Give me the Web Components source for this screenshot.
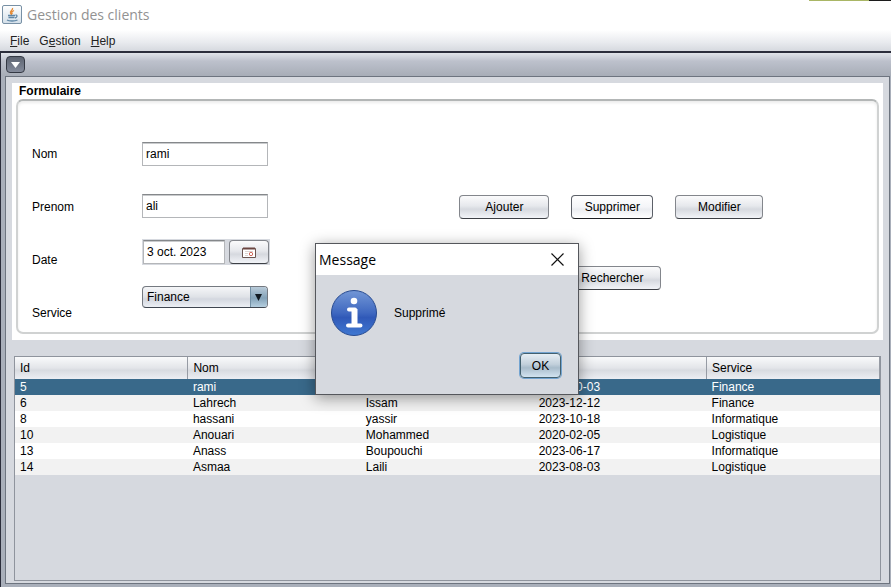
<!DOCTYPE html>
<html lang="fr">
<head>
<meta charset="UTF-8">
<meta name="viewport" content="width=device-width, initial-scale=1">
<title>Gestion des clients</title>
<style>
    body {
        margin: 0;
        min-height: 100vh;
        display: flex;
        flex-direction: column;
        background: #fff;
        color: #000;
        font-family: "Liberation Sans", Arial, sans-serif;
        font-size: 12px;
    }

    internal-frame {
        flex: 1;
    }

    client-table {
        flex: 1;
    }
</style>
</head>
<body>
    <window-title>Gestion des clients</window-title>
    <menu-bar></menu-bar>
    <internal-frame>
        <client-form></client-form>
        <client-table selected="5"></client-table>
    </internal-frame>
    <message-dialog heading="Message">Supprimé</message-dialog>

<script>
// Relief commun à tous les boutons
const buttonStyles = `
    button {
        height: 24px;
        padding: 0;
        border: 1px solid #83868c;
        border-bottom-color: #3d4046;
        border-radius: 4px;
        background: linear-gradient(#fbfbfc, #e6e8ec 45%, #d6d9df 60%, #f2f4f8);
        color: #000;
        font: inherit;
    }
`;

// Barre de titre de la fenêtre
class WindowTitle extends HTMLElement {
    constructor() {
        super();
        this.attachShadow({ mode: 'open' });
    }

    connectedCallback() {
        this.shadowRoot.innerHTML = `
            <style>
                :host {
                    display: flex;
                    align-items: center;
                    gap: 5px;
                    height: 29px;
                    padding: 0 0 1px 2px;
                    color: #929292;
                    font: 14px "Open Sans", sans-serif;
                }
                .edge {
                    display: flex;
                    align-self: flex-start;
                    margin-left: auto;
                }
                .edge i {
                    width: 60px;
                    height: 1px;
                    background: #a9b665;
                }
                .edge i + i {
                    width: 22px;
                    background: #1c1c1c;
                }
            </style>
            <svg width="20" height="20" viewBox="0 0 20 20" aria-hidden="true">
                <defs>
                    <linearGradient id="tile" x2="0" y2="1">
                        <stop offset="0" stop-color="#fff"/>
                        <stop offset="1" stop-color="#d3dfe9"/>
                    </linearGradient>
                </defs>
                <rect x=".5" y=".5" width="19" height="18" rx="1.5" fill="url(#tile)" stroke="#7890a5"/>
                <path d="M10.5 3c1 2-3 3-2 5 .3.8 1 1.200 1 2M12 5.500c-2 1-3 1.500-1.600 3.500" fill="none" stroke="#e58a35" stroke-width="1.300"/>
                <path d="M6 10.500h7M6.500 12.500h6M13.500 10c2.500 0 1.500 2.500-.5 3M5 15c2 1.300 8 1.300 10.500 0" fill="none" stroke="#5f86a6" stroke-width="1.300"/>
            </svg>
            <span><slot></slot></span>
            <div class="edge"><i></i><i></i></div>
        `;
    }
}

// Menus de l'application, avec leur lettre mnémonique soulignée
class MenuBar extends HTMLElement {
    constructor() {
        super();
        this.attachShadow({ mode: 'open' });
    }

    connectedCallback() {
        this.shadowRoot.innerHTML = `
            <style>
                :host {
                    display: block;
                }
                nav {
                    display: flex;
                    gap: 10px;
                    height: 21px;
                    padding-left: 10px;
                    background: linear-gradient(#fff, #e8eaee 60%, #d6d9df);
                }
                button {
                    padding: 0;
                    border: 0;
                    background: none;
                    color: #222;
                    font: inherit;
                }
            </style>
            <nav>
                <button type="button"><u>F</u>ile</button>
                <button type="button">G<u>e</u>stion</button>
                <button type="button"><u>H</u>elp</button>
            </nav>
        `;
    }
}

// Fenêtre interne qui entoure le contenu
class InternalFrame extends HTMLElement {
    constructor() {
        super();
        this.attachShadow({ mode: 'open' });
    }

    connectedCallback() {
        this.shadowRoot.innerHTML = `
            <style>
                :host {
                    display: flex;
                    flex-direction: column;
                    box-sizing: border-box;
                    padding: 0 1px 3px 4px;
                    border-top: 2px solid #2b2d3b;
                    border-left: 1px solid #2b2d3b;
                    background: #a9afba;
                }
                header {
                    display: flex;
                    align-items: center;
                    height: 23px;
                    margin: 0 -1px 0 -4px;
                    padding-left: 5px;
                    background: linear-gradient(#e0e3e9, #bdc1cc 35%, #a7adb7);
                }
                button {
                    display: flex;
                    width: 19px;
                    height: 17px;
                    padding: 0;
                    align-items: center;
                    justify-content: center;
                    border: 1px solid #343944;
                    border-radius: 4px;
                    background: linear-gradient(#5d6471, #848b9b);
                }
                .content {
                    flex: 1;
                    display: flex;
                    flex-direction: column;
                    gap: 16px;
                    padding: 6px 6px 2px;
                    border: 1px solid #6d747f;
                    background: #d6d9df;
                }
            </style>
            <header>
                <button type="button" aria-label="Menu de la fenêtre">
                    <svg width="9" height="6" viewBox="0 0 9 6"><path d="M0 0h9L4.500 6z" fill="#fff"/></svg>
                </button>
            </header>
            <div class="content"><slot></slot></div>
        `;
    }
}

// Formulaire de saisie d'un client
class ClientForm extends HTMLElement {
    constructor() {
        super();
        this.attachShadow({ mode: 'open' });
    }

    get styles() {
        return `
            :host {
                display: block;
                padding: 0 4px 6px;
                background: #fff;
            }
            h2 {
                margin: 0;
                padding-left: 3px;
                font-size: 12px;
                line-height: 16px;
            }
            form {
                display: grid;
                grid-template-columns: 110px 128px 5fr auto 3fr;
                align-items: start;
                padding: 41px 0 7px 14px;
                border: 2px solid #d0d2d2;
                border-top-color: #b3b6b6;
                border-radius: 7px;
                box-shadow: inset 0 2px 3px #ececec;
            }
            .labels {
                display: flex;
                flex-direction: column;
                gap: 29px;
                line-height: 24px;
            }
            .fields {
                display: flex;
                flex-direction: column;
                align-items: flex-start;
                gap: 21px;
            }
            input {
                box-sizing: border-box;
                width: 126px;
                height: 24px;
                padding: 0 3px;
                border: 1px solid #b4b6b9;
                border-top-color: #85888b;
                border-radius: 0;
                background: #fff;
                box-shadow: inset 0 1px #c9cbcd;
                color: #000;
                font: inherit;
            }
            #nom {
                margin-bottom: 7px;
            }
            .date {
                display: flex;
                gap: 4px;
                padding: 1px;
                background: #d6d9df;
            }
            .date input {
                width: 82px;
            }
            .date button {
                width: 40px;
            }
            .date svg {
                display: block;
                margin: auto;
            }
            .combo {
                position: relative;
                width: 126px;
            }
            select {
                appearance: none;
                display: block;
                width: 100%;
                height: 22px;
                padding: 0 4px;
                border: 1px solid #747980;
                border-bottom-color: #3f4650;
                border-radius: 4px;
                background: linear-gradient(#f5f6f8, #dfe2e7 50%, #d3d7df 60%, #eceff4);
                color: #000;
                font: inherit;
            }
            .combo svg {
                position: absolute;
                top: 1px;
                right: 1px;
                pointer-events: none;
            }
            .actions {
                display: grid;
                grid-template-columns: 90px 82px 88px;
                gap: 47px 22px;
                grid-column: 4;
                padding-top: 53px;
            }
            .hover {
                border-color: #5c6068;
                border-bottom-color: #1c1e22;
                background: linear-gradient(#fff, #f4f5f8 50%, #ebedf1 60%, #fff);
            }
            .search {
                grid-column: 2;
                justify-self: center;
                width: 98px;
            }
        `;
    }

    connectedCallback() {
        this.shadowRoot.innerHTML = `
            <style>${buttonStyles}${this.styles}</style>
            <h2>Formulaire</h2>
            <form>
                <div class="labels">
                    <label for="nom">Nom</label>
                    <label for="prenom">Prenom</label>
                    <label for="date">Date</label>
                    <label for="service">Service</label>
                </div>
                <div class="fields">
                    <input id="nom" type="text" value="rami">
                    <input id="prenom" type="text" value="ali">
                    <div class="date">
                        <input id="date" type="text" value="3 oct. 2023">
                        <button type="button" aria-label="Choisir une date">
                            <svg width="14" height="11" viewBox="0 0 14 11">
                                <path d="M.5 1.500h13v9H.5z" fill="#fff" stroke="#6b5551"/>
                                <path d="M1 1.500h12" stroke="#6b4540" stroke-width="2"/>
                                <path d="M3 4.500h8M3 6.500h3M3 8.500h3" stroke="#ddd5d2"/>
                                <circle cx="9" cy="7" r="1.700" fill="none" stroke="#cf6a5d"/>
                            </svg>
                        </button>
                    </div>
                    <div class="combo">
                        <select id="service">
                            <option>Finance</option>
                            <option>Informatique</option>
                            <option>Logistique</option>
                        </select>
                        <svg width="17" height="20" viewBox="0 0 17 20">
                            <defs>
                                <linearGradient id="arrow" x2="0" y2="1">
                                    <stop offset="0" stop-color="#b9cbd9"/>
                                    <stop offset=".55" stop-color="#83a2b8"/>
                                    <stop offset="1" stop-color="#b5cfe0"/>
                                </linearGradient>
                            </defs>
                            <path d="M0 0h14q3 0 3 3v14q0 3-3 3H0z" fill="url(#arrow)"/>
                            <path d="M.5 0v20" stroke="#7391a6"/>
                            <path d="M5 7h7l-3.500 7z" fill="#111a22"/>
                        </svg>
                    </div>
                </div>
                <div class="actions">
                    <button type="button">Ajouter</button>
                    <button type="button" class="hover">Supprimer</button>
                    <button type="button">Modifier</button>
                    <button type="button" class="search">Rechercher</button>
                </div>
            </form>
        `;
    }
}

// Liste des clients, la ligne "selected" est mise en évidence
class ClientTable extends HTMLElement {
    constructor() {
        super();
        this.attachShadow({ mode: 'open' });
        this.clients = [
            [5, 'rami', 'ali', '2023-10-03', 'Finance'],
            [6, 'Lahrech', 'Issam', '2023-12-12', 'Finance'],
            [8, 'hassani', 'yassir', '2023-10-18', 'Informatique'],
            [10, 'Anouari', 'Mohammed', '2020-02-05', 'Logistique'],
            [13, 'Anass', 'Boupouchi', '2023-06-17', 'Informatique'],
            [14, 'Asmaa', 'Laili', '2023-08-03', 'Logistique']
        ];
    }

    connectedCallback() {
        const selected = Number(this.getAttribute('selected'));
        const rows = this.clients.map(client => `
            <tr${client[0] === selected ? ' class="selected"' : ''}>
                ${client.map(value => `<td>${value}</td>`).join('')}
            </tr>
        `).join('');

        this.shadowRoot.innerHTML = `
            <style>
                :host {
                    display: block;
                    margin: 0 2px;
                    border: 1px solid #8f949d;
                }
                table {
                    width: 100%;
                    table-layout: fixed;
                    border-collapse: collapse;
                }
                th, td {
                    box-sizing: border-box;
                    height: 16px;
                    padding: 1px 5px 0;
                    line-height: 15px;
                    text-align: left;
                    font-weight: normal;
                }
                th {
                    height: 22px;
                    border-right: 1px solid #969ba4;
                }
                thead {
                    background: linear-gradient(#f9fafb, #e3e5e9 50%, #d8dbe0 60%, #eceef3);
                }
                tbody tr {
                    background: #fff;
                }
                tbody tr:nth-child(even) {
                    background: #f2f2f2;
                }
                tbody .selected {
                    background: #39698a;
                    color: #fff;
                }
            </style>
            <table>
                <thead>
                    <tr><th>Id</th><th>Nom</th><th>Prenom</th><th aria-label="Date"></th><th>Service</th></tr>
                </thead>
                <tbody>${rows}</tbody>
            </table>
        `;
    }
}

// Boîte de dialogue d'information
class MessageDialog extends HTMLElement {
    constructor() {
        super();
        this.attachShadow({ mode: 'open' });
    }

    connectedCallback() {
        const heading = this.getAttribute('heading');

        this.shadowRoot.innerHTML = `
            <style>
                ${buttonStyles}
                :host {
                    position: absolute;
                    top: 243px;
                    left: 315px;
                    box-sizing: border-box;
                    width: 264px;
                    border: 1px solid #55575c;
                    background: #d6d9df;
                    box-shadow: 0 3px 14px rgba(0, 0, 0, .4);
                }
                header {
                    display: flex;
                    align-items: center;
                    justify-content: space-between;
                    height: 31px;
                    padding: 0 14px 0 3px;
                    background: #fff;
                    font: 14px "Open Sans", sans-serif;
                }
                .close {
                    display: flex;
                    height: auto;
                    border: 0;
                    background: none;
                }
                .message {
                    display: flex;
                    align-items: center;
                    gap: 16px;
                    padding: 14px 14px 0;
                }
                .footer {
                    display: flex;
                    justify-content: flex-end;
                    padding: 16px 17px;
                }
                .ok {
                    width: 41px;
                    height: 25px;
                    border-color: #42606f;
                    background: linear-gradient(#e6eef4, #c2d0db 45%, #a8bccb 60%, #d2e3f0);
                    box-shadow: 0 0 0 1px #73a4d1;
                }
            </style>
            <header>
                <span>${heading}</span>
                <button type="button" class="close" aria-label="Fermer">
                    <svg width="13" height="13" viewBox="0 0 13 13"><path d="M.5.5l12 12M12.500.5l-12 12" stroke="#111" stroke-width="1.200"/></svg>
                </button>
            </header>
            <div class="message">
                <svg width="48" height="48" viewBox="0 0 48 48" aria-hidden="true">
                    <defs>
                        <linearGradient id="info" x2="0" y2="1">
                            <stop offset="0" stop-color="#7397d6"/>
                            <stop offset=".5" stop-color="#3f68c0"/>
                            <stop offset=".6" stop-color="#3059b8"/>
                            <stop offset="1" stop-color="#3f78d2"/>
                        </linearGradient>
                    </defs>
                    <circle cx="24" cy="24" r="22.500" fill="url(#info)" stroke="#284b91"/>
                    <circle cx="24" cy="12" r="3.300" fill="#fff"/>
                    <path d="M19 20.500h6v15M18 36.500h12.500" fill="none" stroke="#fff" stroke-width="4" stroke-linecap="round" stroke-linejoin="round"/>
                    <path d="M21.500 20h6v17h-6z" fill="#fff"/>
                </svg>
                <span><slot></slot></span>
            </div>
            <div class="footer">
                <button type="button" class="ok">OK</button>
            </div>
        `;
    }
}

// Registrar les composants
customElements.define('window-title', WindowTitle);
customElements.define('menu-bar', MenuBar);
customElements.define('internal-frame', InternalFrame);
customElements.define('client-form', ClientForm);
customElements.define('client-table', ClientTable);
customElements.define('message-dialog', MessageDialog);
</script>
</body>
</html>
